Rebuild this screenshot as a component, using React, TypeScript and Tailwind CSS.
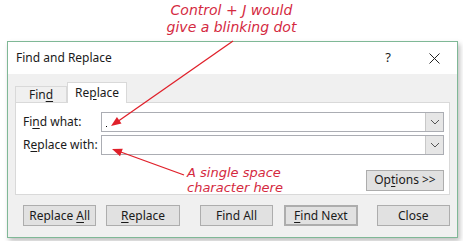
import React from "react";

const U = ({ children }: { children: React.ReactNode }) => (
  <span className="underline underline-offset-2">{children}</span>
);

function Btn({ children, className = "" }: { children: React.ReactNode; className?: string }) {
  return (
    <div
      className={`h-[21px] w-[74px] flex items-center justify-center bg-[#e1e1e1] border border-[#adadad] text-[12px] text-[#1a1a1a] ${className}`}
    >
      {children}
    </div>
  );
}

function Combo() {
  return (
    <div className="flex-1 h-[20px] border border-[#abadb3] bg-white flex justify-end">
      <div className="w-[18px] h-full bg-[#e6e6e6] border-l border-[#c8c8c8] flex items-center justify-center">
        <svg width="10" height="6" viewBox="0 0 10 6">
          <path d="M1 1 L5 5 L9 1" fill="none" stroke="#555" strokeWidth="1" />
        </svg>
      </div>
    </div>
  );
}

export default function App() {
  return (
    <div className="relative w-[463px] h-[241px] bg-white overflow-hidden font-['Noto_Sans',sans-serif] text-[#1a1a1a]">
      <div className="h-[41px] flex flex-col items-center pt-[2px] text-[#d42a3f] italic text-[14px] leading-[17px] font-['DejaVu_Sans',sans-serif]">
        <div>Control + J would</div>
        <div>give a blinking dot</div>
      </div>

      <div className="ml-[7px] w-[451px] h-[197px] border border-[#7fb896] shadow-[2px_3px_5px_rgba(0,0,0,0.25)] flex flex-col">
        <div className="h-[32px] bg-white flex items-center pl-[8px] text-[12px]">
          <span>Find and Replace</span>
          <span className="ml-auto mr-[38px] text-[13px]">?</span>
          <svg width="11" height="11" viewBox="0 0 11 11" className="mr-[17px]">
            <path d="M0.5 0.5 L10.5 10.5 M10.5 0.5 L0.5 10.5" stroke="#222" strokeWidth="1" />
          </svg>
        </div>
        <div className="flex-1 bg-[#f0f0f0] px-[7px] pt-[8px] flex flex-col">
          <div className="flex items-end h-[20px] text-[12px]">
            <div className="w-[52px] h-[16px] border border-b-0 border-[#d9d9d9] bg-[#f0f0f0] flex items-center justify-center">
              <span>
                Fin<U>d</U>
              </span>
            </div>
            <div className="relative z-10 w-[60px] h-[21px] -mb-px border border-b-0 border-[#d9d9d9] bg-white flex items-center justify-center">
              <span>
                Re<U>p</U>lace
              </span>
            </div>
          </div>
          <div className="h-[93px] bg-white border border-[#d9d9d9] pt-[9px] pl-[7px] pr-[5px] flex flex-col text-[12px]">
            <div className="flex items-center h-[20px]">
              <div className="w-[78px]">
                Fi<U>n</U>d what:
              </div>
              <div className="relative flex-1 flex">
                <Combo />
                <div className="absolute left-[5px] top-[14px] w-[1px] h-[1px] bg-black" />
              </div>
            </div>
            <div className="flex items-center h-[20px] mt-[3px]">
              <div className="w-[78px]">
                R<U>e</U>place with:
              </div>
              <Combo />
            </div>
            <div className="flex items-center mt-[10px]">
              <div className="ml-[164px] text-[#d42a3f] italic text-[13px] leading-[15px] font-['DejaVu_Sans',sans-serif]">
                <div>A single space</div>
                <div>character here</div>
              </div>
              <Btn className="ml-auto w-[78px]">
                <span>
                  Op<U>t</U>ions &gt;&gt;
                </span>
              </Btn>
            </div>
          </div>
          <div className="flex mt-[10px] pl-[8px]">
            <Btn>
              <span>
                Replace <U>A</U>ll
              </span>
            </Btn>
            <Btn className="ml-[10px] w-[73px]">
              <span>
                <U>R</U>eplace
              </span>
            </Btn>
            <Btn className="ml-[20px] w-[73px]">Find All</Btn>
            <Btn className="ml-[11px] border-2 border-[#0078d7]">
              <span>
                <U>F</U>ind Next
              </span>
            </Btn>
            <Btn className="ml-[19px]">Close</Btn>
          </div>
        </div>
      </div>

      <svg className="absolute left-0 top-0 pointer-events-none" width="463" height="241" viewBox="0 0 463 241">
        <line x1="233" y1="41" x2="117" y2="122" stroke="#e0202a" strokeWidth="1.3" />
        <polygon points="111,126 121.49,123.56 116.91,117.0" fill="#e0202a" />
        <line x1="184" y1="175" x2="118" y2="151" stroke="#e0202a" strokeWidth="1.3" />
        <polygon points="112,149 122.77,148.64 120.05,156.16" fill="#e0202a" />
      </svg>
    </div>
  );
}
